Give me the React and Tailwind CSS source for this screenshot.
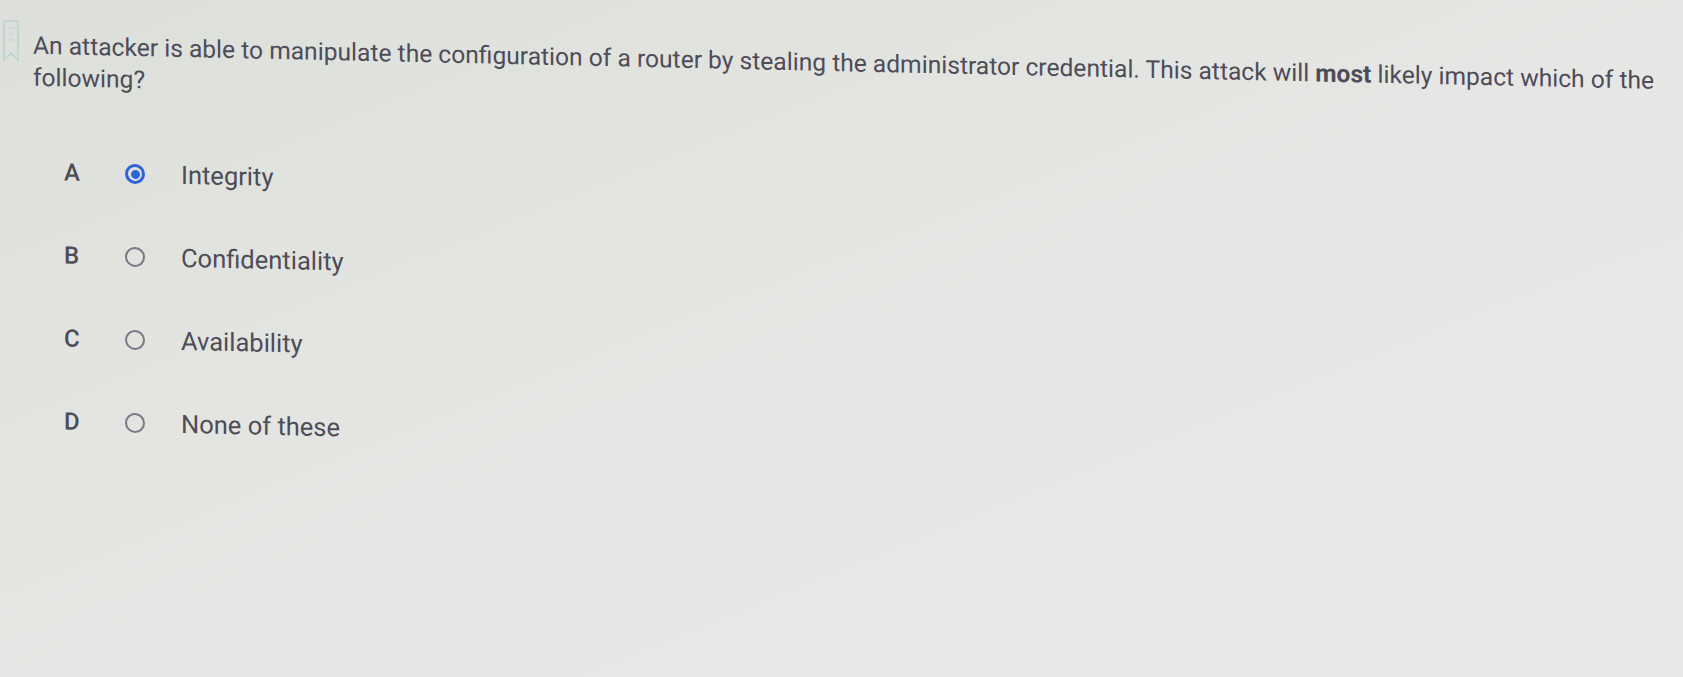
const options = [
  { key: 'A', label: 'Integrity', checked: true },
  { key: 'B', label: 'Confidentiality' },
  { key: 'C', label: 'Availability' },
  { key: 'D', label: 'None of these' },
]

function Radio({ checked }) {
  if (checked) {
    return (
      <span className="flex h-[20px] w-[20px] items-center justify-center rounded-full border-[3px] border-[#2f63d8]">
        <span className="h-[9px] w-[9px] rounded-full bg-[#2f63d8]" />
      </span>
    )
  }
  return <span className="h-[20px] w-[20px] rounded-full border-2 border-[#7a7886]" />
}

export default function App() {
  return (
    <div
      className="relative h-[677px] w-[1683px] overflow-hidden bg-gradient-to-br from-[#dcdfda] via-[#e6e7e4] to-[#e9e9e8] text-[#4e4c58]"
      style={{ fontFamily: 'Roboto, "Noto Sans", sans-serif' }}
    >
      {/* bookmark marker at the left edge */}
      <svg className="absolute left-[2px] top-[20px]" width="18" height="42" viewBox="0 0 18 42" fill="none">
        <path d="M2 1H16V40L9 33L2 40Z" stroke="#b9d3d4" strokeWidth="1.5" />
        <path d="M6 8H12M6 14H12M6 20H12" stroke="#c8dadb" strokeWidth="1.5" />
      </svg>

      {/* the photo is taken at a slight angle: text slopes down to the right */}
      <div className="origin-left skew-y-[1.24deg]">
        <div className="pl-[33px] pt-[29px]">
          <p className="w-[1640px] text-[24.6px] leading-[32px]">
            An attacker is able to manipulate the configuration of a router by stealing the administrator credential.
            This attack will <span className="font-bold">most</span> likely impact which of the following?
          </p>
        </div>

        <div className="mt-[63px] flex flex-col gap-[53px] pl-[64px]">
          {options.map((o) => (
            <div key={o.key} className="flex h-[30px] items-center text-[25.5px]">
              <span className="w-[61px] text-[24px] font-medium">{o.key}</span>
              <span className="flex w-[56px] items-center">
                <Radio checked={o.checked} />
              </span>
              <span>{o.label}</span>
            </div>
          ))}
        </div>
      </div>
    </div>
  )
}
